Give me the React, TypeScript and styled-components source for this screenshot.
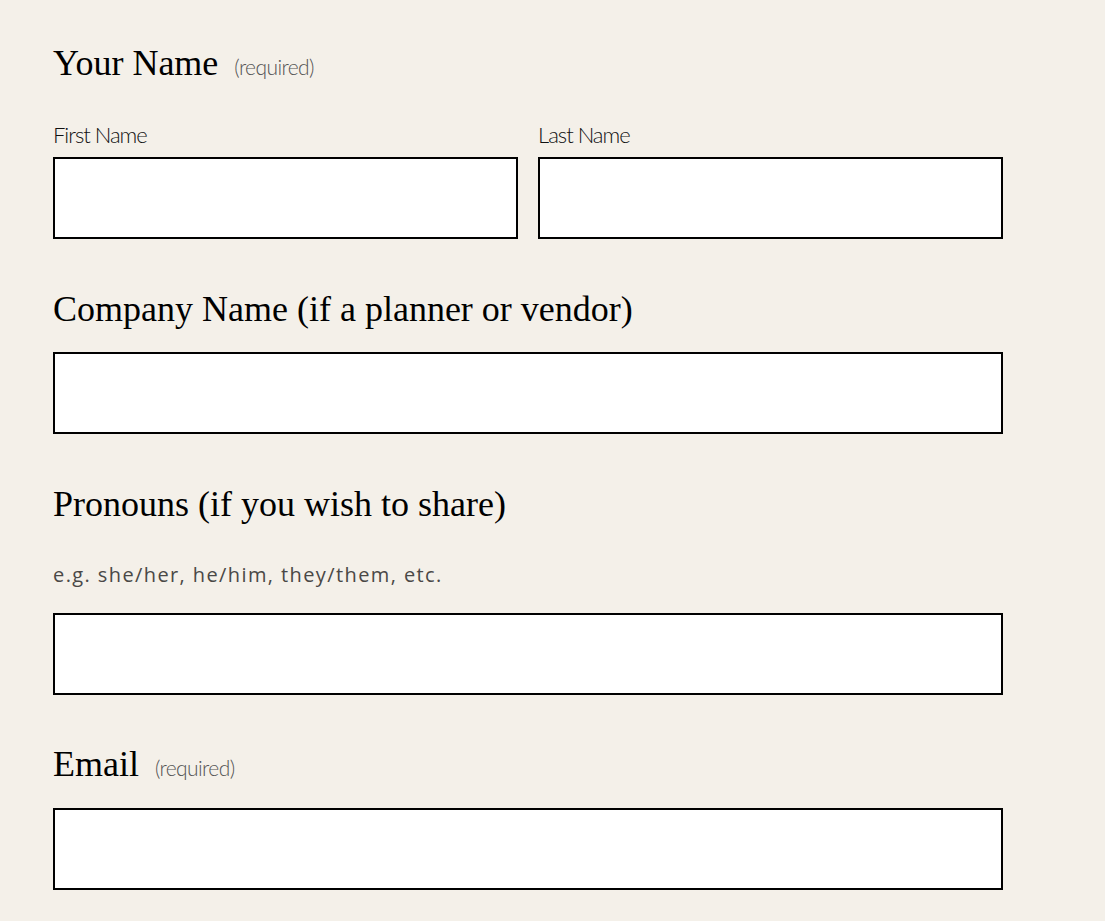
import * as React from "react";
import styled, { createGlobalStyle } from "styled-components";

const GlobalStyle = createGlobalStyle`
    html, body {
        margin: 0;
        padding: 0;
        background: #f4f0e9;
    }
`;

const Form = styled.form`
    display: flex;
    flex-direction: column;
    width: 950px;
    padding: 42px 0 30px 53px;
`;

const Section = styled.div<{ gap: number }>`
    display: flex;
    flex-direction: column;
    margin-bottom: ${props => props.gap}px;
`;

const Heading = styled.div`
    display: flex;
    align-items: baseline;
    gap: 16px;
    font-family: "Liberation Serif", "Times New Roman", serif;
    font-size: 36px;
    line-height: 43px;
    color: #000;
`;

const Required = styled.span`
    font-family: Lato, "Liberation Sans", sans-serif;
    font-weight: 300;
    font-size: 21px;
    letter-spacing: -0.6px;
    color: #555;
`;

const Help = styled.div`
    font-family: "Open Sans", "Liberation Sans", sans-serif;
    font-size: 20px;
    line-height: 24px;
    letter-spacing: 1.4px;
    color: #4a4846;
    margin: 37px 0 26px;
`;

const Row = styled.div`
    display: flex;
    gap: 20px;
    margin-top: 34px;
`;

const Field = styled.label`
    flex: 1;
    display: flex;
    flex-direction: column;
    gap: 9px;
`;

const SubLabel = styled.span`
    font-family: Lato, "Liberation Sans", sans-serif;
    font-weight: 300;
    font-size: 22px;
    letter-spacing: -1px;
    color: #111;
    line-height: 26px;
`;

const Input = styled.input<{ top?: number }>`
    box-sizing: border-box;
    display: block;
    width: 100%;
    height: 82px;
    margin: ${props => props.top ?? 0}px 0 0;
    border: 2px solid #000;
    background: #fff;
    padding: 0 16px;
    font-size: 18px;
    outline: none;
`;

export default function App() {
    return (
        <>
            <GlobalStyle />
            <Form onSubmit={e => e.preventDefault()}>
                <Section gap={49}>
                    <Heading>
                        Your Name <Required>(required)</Required>
                    </Heading>
                    <Row>
                        <Field>
                            <SubLabel>First Name</SubLabel>
                            <Input type="text" />
                        </Field>
                        <Field>
                            <SubLabel>Last Name</SubLabel>
                            <Input type="text" />
                        </Field>
                    </Row>
                </Section>
                <Section gap={49}>
                    <Heading>Company Name (if a planner or vendor)</Heading>
                    <Input type="text" top={21} />
                </Section>
                <Section gap={48}>
                    <Heading>Pronouns (if you wish to share)</Heading>
                    <Help>e.g. she/her, he/him, they/them, etc.</Help>
                    <Input type="text" />
                </Section>
                <Section gap={0}>
                    <Heading>
                        Email <Required>(required)</Required>
                    </Heading>
                    <Input type="text" top={19} />
                </Section>
            </Form>
        </>
    );
}
